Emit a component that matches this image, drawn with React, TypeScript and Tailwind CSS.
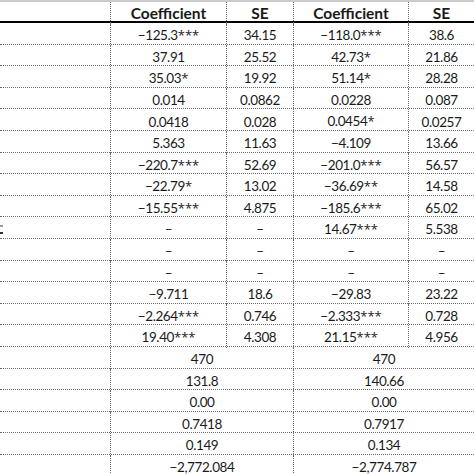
import React from "react";

type Row = { c1: string; s1?: string; c2: string; s2?: string; mark?: boolean };

const rows: Row[] = [
  { c1: "−125.3***", s1: "34.15", c2: "−118.0***", s2: "38.6" },
  { c1: "37.91", s1: "25.52", c2: "42.73*", s2: "21.86" },
  { c1: "35.03*", s1: "19.92", c2: "51.14*", s2: "28.28" },
  { c1: "0.014", s1: "0.0862", c2: "0.0228", s2: "0.087" },
  { c1: "0.0418", s1: "0.028", c2: "0.0454*", s2: "0.0257" },
  { c1: "5.363", s1: "11.63", c2: "−4.109", s2: "13.66" },
  { c1: "−220.7***", s1: "52.69", c2: "−201.0***", s2: "56.57" },
  { c1: "−22.79*", s1: "13.02", c2: "−36.69**", s2: "14.58" },
  { c1: "−15.55***", s1: "4.875", c2: "−185.6***", s2: "65.02" },
  { c1: "–", s1: "–", c2: "14.67***", s2: "5.538", mark: true },
  { c1: "–", s1: "–", c2: "–", s2: "–" },
  { c1: "–", s1: "–", c2: "–", s2: "–" },
  { c1: "−9.711", s1: "18.6", c2: "−29.83", s2: "23.22" },
  { c1: "−2.264***", s1: "0.746", c2: "−2.333***", s2: "0.728" },
  { c1: "19.40***", s1: "4.308", c2: "21.15***", s2: "4.956" },
  { c1: "470", c2: "470" },
  { c1: "131.8", c2: "140.66" },
  { c1: "0.00", c2: "0.00" },
  { c1: "0.7418", c2: "0.7917" },
  { c1: "0.149", c2: "0.134" },
  { c1: "−2,772.084", c2: "−2,774.787" },
];

const grid = "grid grid-cols-[110px_116px_67px_115px_66px]";
const cell =
  "flex items-center justify-center whitespace-nowrap border-l border-dotted border-[#6b6b6b] pt-[2px]";

function Val({ v }: { v: string }) {
  const m = v.match(/^(.*?)(\*+)$/);
  if (!m) return <span>{v}</span>;
  return (
    <span>
      {m[1]}
      <span className="font-['Open_Sans'] text-[13px] tracking-[0px]">{m[2]}</span>
    </span>
  );
}

export default function App() {
  return (
    <div className="w-[474px] h-[474px] overflow-hidden bg-white font-['Lato','Liberation_Sans',sans-serif] text-[13.5px] tracking-[-0.4px] text-[#1a1a1a]">
      <div
        className={`${grid} h-[23px] border-t-2 border-t-[#cccccc] border-b-2 border-b-black font-bold text-[15.5px] tracking-[0px]`}
      >
        <div />
        <div className="flex items-center justify-center border-l border-dotted border-[#6b6b6b]">Coefficient</div>
        <div className="flex items-center justify-center border-l border-dotted border-[#6b6b6b]">SE</div>
        <div className="flex items-center justify-center border-l border-dotted border-[#6b6b6b]">Coefficient</div>
        <div className="flex items-center justify-center border-l border-dotted border-[#6b6b6b]">SE</div>
      </div>
      {rows.map((r, i) => (
        <div
          key={i}
          className={`${grid} h-[21.6px] border-b border-dotted border-[#6b6b6b]`}
        >
          <div className="flex flex-col justify-center gap-[5px] pt-[2px]">
            {r.mark ? (
              <>
                <div className="w-[3px] h-[2px] bg-[#9a9a9a]" />
                <div className="w-[3px] h-[2px] bg-[#333333]" />
              </>
            ) : null}
          </div>
          {r.s1 !== undefined ? (
            <>
              <div className={cell}><Val v={r.c1} /></div>
              <div className={cell}><Val v={r.s1} /></div>
              <div className={cell}><Val v={r.c2} /></div>
              <div className={cell}><Val v={r.s2} /></div>
            </>
          ) : (
            <>
              <div className={`${cell} col-span-2`}><Val v={r.c1} /></div>
              <div className={`${cell} col-span-2`}><Val v={r.c2} /></div>
            </>
          )}
        </div>
      ))}
    </div>
  );
}
